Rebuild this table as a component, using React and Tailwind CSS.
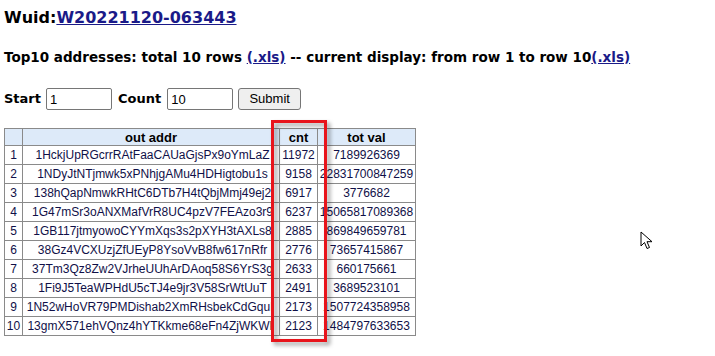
const rows = [
  ["1HckjUpRGcrrRAtFaaCAUaGjsPx9oYmLaZ", "11972", "7189926369"],
  ["1NDyJtNTjmwk5xPNhjgAMu4HDHigtobu1s", "9158", "22831700847259"],
  ["138hQapNmwkRHtC6DTb7H4tQbjMmj49ej2", "6917", "3776682"],
  ["1G47mSr3oANXMafVrR8UC4pzV7FEAzo3r9", "6237", "15065817089368"],
  ["1GB117jtmyowoCYYmXqs3s2pXYH3tAXLs8", "2885", "869849659781"],
  ["38Gz4VCXUzjZfUEyP8YsoVvB8fw617nRfr", "2776", "73657415867"],
  ["37Tm3Qz8Zw2VJrheUUhArDAoq58S6YrS3g", "2633", "660175661"],
  ["1Fi9J5TeaWPHdU5cTJ4e9jr3V58SrWtUuT", "2491", "3689523101"],
  ["1N52wHoVR79PMDishab2XmRHsbekCdGquK", "2173", "1507724358958"],
  ["13gmX571ehVQnz4hYTKkme68eFn4ZjWKWP", "2123", "1484797633653"],
];

const verdana = "font-['DejaVu_Sans',Verdana,sans-serif]";
const arial = "font-['Liberation_Sans',Arial,sans-serif]";
const cell = "border border-[#8a8a8a] p-0";

export default function App() {
  return (
    <div className="relative w-[715px] h-[356px] bg-white overflow-hidden px-[4px] text-black">
      <div className={`${verdana} font-bold text-[16px] leading-[20px] pt-[8px]`}>
        Wuid:
        <a href="#" className="text-[#1a1a88] underline">
          W20221120-063443
        </a>
      </div>

      <div className={`${verdana} font-bold text-[13.5px] leading-[16px] mt-[21px] whitespace-nowrap`}>
        Top10 addresses: total 10 rows{" "}
        <a href="#" className="text-[#1a1a88] underline">(.xls)</a> -- current
        display: from row 1 to row 10
        <a href="#" className="text-[#1a1a88] underline">(.xls)</a>
      </div>

      <div className={`flex items-center mt-[23px] h-[22px] ${verdana} font-bold text-[13px]`}>
        <span>Start</span>
        <input
          defaultValue="1"
          className={`ml-[5px] w-[66px] h-[22px] border border-[#767676] rounded-[2px] px-[3px] ${arial} font-normal text-[13px] outline-none`}
        />
        <span className="ml-[6px]">Count</span>
        <input
          defaultValue="10"
          className={`ml-[6px] w-[66px] h-[22px] border border-[#767676] rounded-[2px] px-[3px] ${arial} font-normal text-[13px] outline-none`}
        />
        <button
          className={`ml-[5px] w-[63px] h-[22px] bg-[#efefef] border border-[#767676] rounded-[3px] ${arial} font-normal text-[13px]`}
        >
          Submit
        </button>
      </div>

      <div className="relative mt-[18px] w-max">
        <table className={`w-[411px] border-collapse table-fixed ${arial} text-[12px] text-[#101048]`}>
          <colgroup>
            <col className="w-[18px]" />
            <col className="w-[257px]" />
            <col className="w-[38px]" />
            <col className="w-[98px]" />
          </colgroup>
          <thead>
            <tr className="h-[17px] bg-[#ddeaf9] text-black text-[13px]">
              <th className={cell}></th>
              <th className={`${cell} font-bold leading-[15px]`}>out addr</th>
              <th className={`${cell} font-bold leading-[15px]`}>cnt</th>
              <th className={`${cell} font-bold leading-[15px]`}>tot val</th>
            </tr>
          </thead>
          <tbody>
            {rows.map((r, i) => (
              <tr key={i} className="h-[19px]">
                <td className={`${cell} text-center leading-[17px]`}>{i + 1}</td>
                <td className={`${cell} pl-[1px] leading-[17px]`}>
                  <div className="w-[248px] overflow-hidden">
                    <div className="w-[257px] text-center whitespace-nowrap">{r[0]}</div>
                  </div>
                </td>
                <td className={`${cell} text-center leading-[17px]`}>{r[1]}</td>
                <td className={`${cell} text-center whitespace-nowrap leading-[17px]`}>{r[2]}</td>
              </tr>
            ))}
          </tbody>
        </table>

        <div className="absolute left-[267px] top-[-8px] w-[56px] h-[222px] border-[3px] border-[#e8141b] drop-shadow-[3px_3px_2px_rgba(0,0,0,0.4)]"></div>
      </div>

      <svg
        className="absolute left-[640px] top-[231px]"
        width="14"
        height="20"
        viewBox="0 0 14 20"
      >
        <path
          d="M1 1 L1 15 L4.5 11.5 L7 17.5 L9.5 16.5 L7 10.7 L12 10.7 Z"
          fill="#fff"
          stroke="#000"
          strokeWidth="1"
        />
      </svg>
    </div>
  );
}
